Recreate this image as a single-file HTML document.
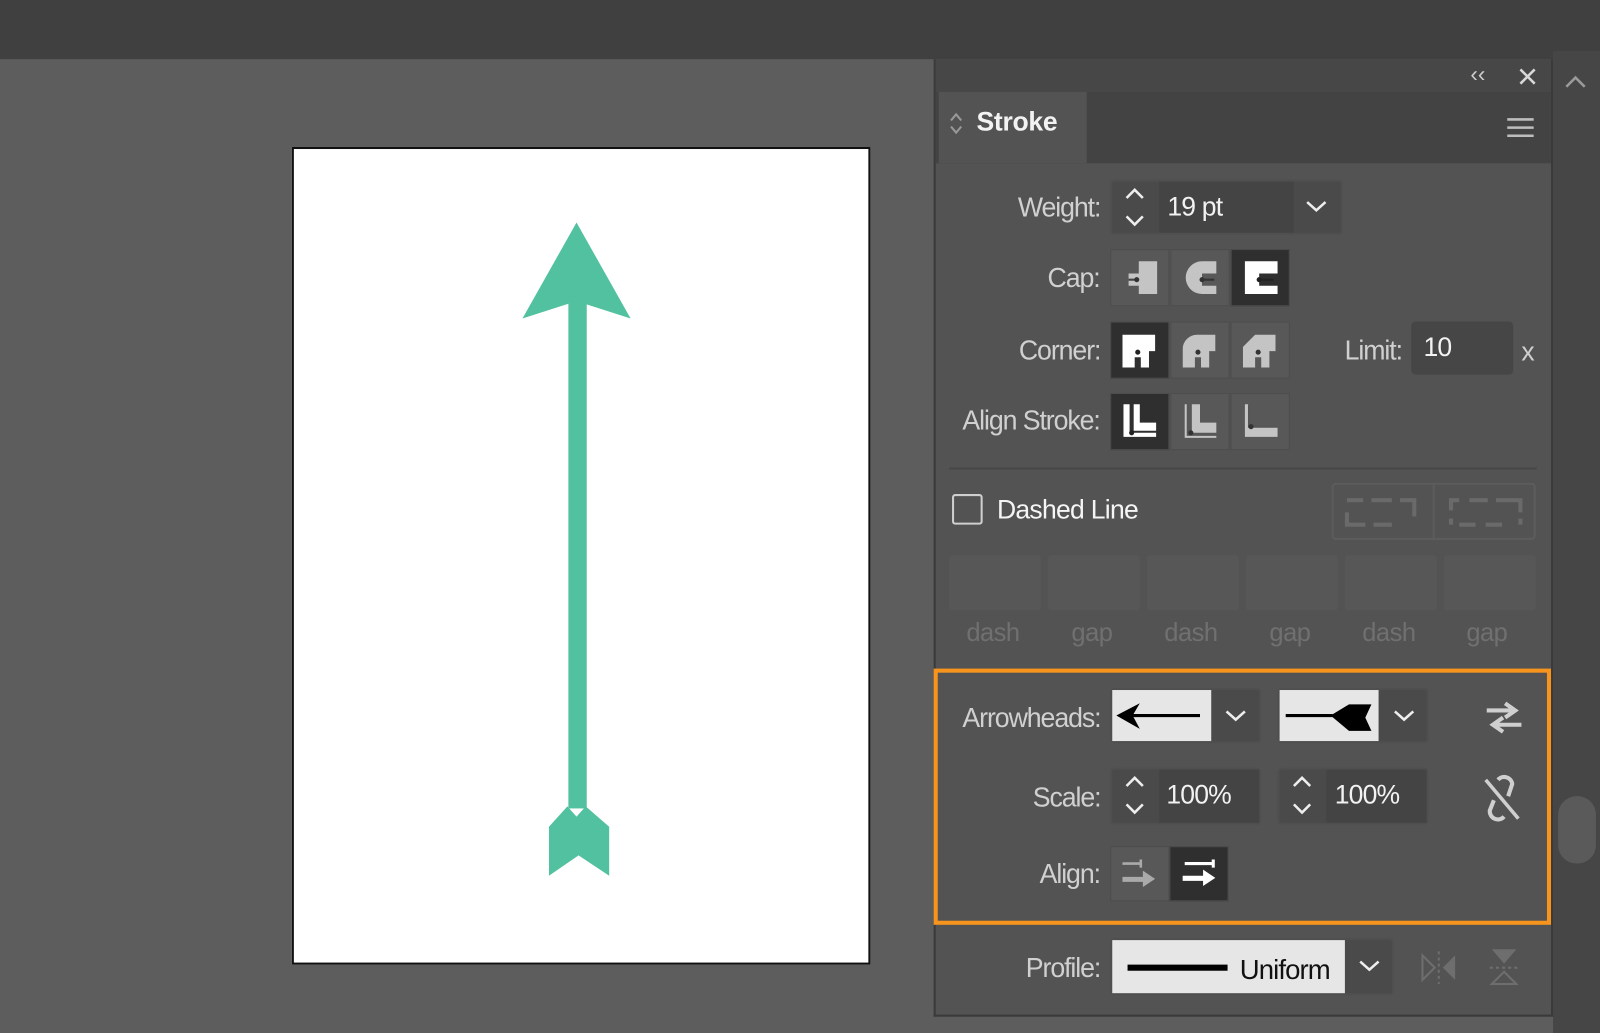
<!DOCTYPE html>
<html><head><style>
*{margin:0;padding:0;box-sizing:border-box}
html,body{width:1600px;height:1033px;overflow:hidden;background:#5b5b5b}
#f{position:absolute;left:0;top:0;width:1568px;height:1012px;transform:scale(1.02041,1.02075);transform-origin:0 0;font-family:"Liberation Sans",sans-serif;background:#5d5d5d}
.a{position:absolute}
.lbl{position:absolute;right:490px;color:#d0d0d0;font-size:27px;letter-spacing:-1.1px;text-align:right;white-space:nowrap;transform:scaleX(0.97);transform-origin:right}
.box{position:absolute;background:#4a4a4a;border:2px solid #4f4f4f;border-radius:4px}
.btn{position:absolute;width:58px;height:56px;background:#585858;border:1px solid #4d4d4d}
.sel{background:#2f2f2f}
.val{position:absolute;color:#f2f2f2;font-size:26px;letter-spacing:-0.8px}
.dim{color:#707070;font-size:25px;position:absolute;letter-spacing:-0.5px}
</style></head><body><div id="f">
<div class="a" style="left:0;top:0;width:1568px;height:58px;background:#404040"></div>
<div class="a" style="left:1522px;top:50px;width:46px;height:962px;background:#464646"></div>
<svg class="a" style="left:1533px;top:72px" width="22" height="16"><path d="M2 13 L11 4 L20 13" stroke="#9a9a9a" stroke-width="2.5" fill="none"/></svg>
<div class="a" style="left:1527px;top:780px;width:37px;height:66px;background:#5a5a5a;border-radius:18px"></div>
<div class="a" style="left:286px;top:144px;width:567px;height:801px;background:#fff;border:2px solid #111"></div>
<svg class="a" style="left:500px;top:210px" width="130" height="660">
<path d="M65 8 L118 102 L65 85 L12 102 Z" fill="#52c1a0"/>
<rect x="57" y="80" width="18" height="502" fill="#52c1a0"/>
<path d="M38 600 L56 580 L65 590 L74 580 L97 600 L97 648 L67 628 L38 648 Z" fill="#52c1a0"/>
</svg>
<div class="a" style="left:915px;top:58px;width:607px;height:938px;background:#535353;border:2px solid #3a3a3a;border-top:none"></div>
<div class="a" style="left:917px;top:58px;width:603px;height:32px;background:#474747"></div>
<div class="a" style="left:1441px;top:60px;color:#cfcfcf;font-size:22px">‹‹</div>
<svg class="a" style="left:1487px;top:65px" width="20" height="20"><path d="M3 3L17 17M17 3L3 17" stroke="#d8d8d8" stroke-width="2.5"/></svg>
<div class="a" style="left:917px;top:90px;width:603px;height:70px;background:#434343"></div>
<div class="a" style="left:920px;top:90px;width:145px;height:70px;background:#535353"></div>
<svg class="a" style="left:930px;top:108px" width="14" height="26"><path d="M2 10L7 4L12 10M2 16L7 22L12 16" stroke="#999" stroke-width="2" fill="none"/></svg>
<div class="a" style="left:957px;top:104px;color:#f2f2f2;font-size:26px;font-weight:bold;letter-spacing:-0.3px">Stroke</div>
<svg class="a" style="left:1477px;top:114px" width="28" height="22"><path d="M0 3H26M0 11H26M0 19H26" stroke="#bdbdbd" stroke-width="2.5"/></svg>

<div class="lbl" style="top:188px">Weight:</div>
<div class="box" style="left:1088px;top:176px;width:228px;height:54px"></div>
<div class="a" style="left:1136px;top:178px;width:132px;height:50px;background:#444"></div>
<svg class="a" style="left:1098px;top:180px" width="28" height="46"><path d="M6 14L14 6L22 14M6 32L14 40L22 32" stroke="#eee" stroke-width="2.5" fill="none"/></svg>
<div class="val" style="left:1144px;top:187px">19 pt</div>
<svg class="a" style="left:1279px;top:195px" width="22" height="14"><path d="M2 3L11 11L20 3" stroke="#eee" stroke-width="2.5" fill="none"/></svg>

<div class="lbl" style="top:257px">Cap:</div>
<div class="btn" style="left:1088px;top:244px"></div><div class="btn" style="left:1147px;top:244px"></div><div class="btn sel" style="left:1206px;top:244px"></div>
<svg class="a" style="left:1100px;top:254px" width="36" height="36"><path d="M16 2H34V34H16V26H6V14H16Z" fill="#c4c4c4"/><path d="M6 20H14" stroke="#444" stroke-width="2"/><circle cx="14" cy="20" r="2.5" fill="#333"/></svg>
<svg class="a" style="left:1158px;top:254px" width="36" height="36"><path d="M20 2H34V14H20V26H34V34H20A16 16 0 0 1 20 2Z" fill="#c4c4c4"/><circle cx="20" cy="20" r="2.5" fill="#333"/><path d="M20 20H32" stroke="#333" stroke-width="2"/></svg>
<svg class="a" style="left:1218px;top:254px" width="36" height="36"><path d="M2 2H34V14H16V26H34V34H2Z" fill="#fff"/><circle cx="16" cy="20" r="2.5" fill="#222"/><path d="M16 20H30" stroke="#222" stroke-width="2"/></svg>

<div class="lbl" style="top:328px">Corner:</div>
<div class="btn sel" style="left:1088px;top:315px"></div><div class="btn" style="left:1147px;top:315px"></div><div class="btn" style="left:1206px;top:315px"></div>
<svg class="a" style="left:1100px;top:326px" width="34" height="36"><path d="M0 2H32V18H26V34H18V24H12V34H0Z" fill="#fff"/><circle cx="15" cy="19" r="2.5" fill="#222"/></svg>
<svg class="a" style="left:1159px;top:326px" width="34" height="36"><path d="M14 2H32V18H26V34H18V24H12V34H0V16A14 14 0 0 1 14 2Z" fill="#c4c4c4"/><circle cx="15" cy="19" r="2.5" fill="#333"/></svg>
<svg class="a" style="left:1218px;top:326px" width="34" height="36"><path d="M12 2H32V18H26V34H18V24H12V34H0V14Z" fill="#c4c4c4"/><circle cx="15" cy="19" r="2.5" fill="#333"/></svg>
<div class="lbl" style="right:194px;top:328px">Limit:</div>
<div class="a" style="left:1383px;top:315px;width:100px;height:52px;background:#464646;border-radius:4px"></div>
<div class="val" style="left:1395px;top:325px">10</div>
<div class="a" style="left:1491px;top:329px;color:#d0d0d0;font-size:26px">x</div>

<div class="lbl" style="top:397px">Align Stroke:</div>
<div class="btn sel" style="left:1088px;top:385px"></div><div class="btn" style="left:1147px;top:385px"></div><div class="btn" style="left:1206px;top:385px"></div>
<svg class="a" style="left:1099px;top:394px" width="36" height="38"><path d="M2 2H8V30H34V34H2Z" fill="#fff"/><path d="M12 2H18V20H34V28H12Z" fill="#fff"/><circle cx="10" cy="30" r="2.5" fill="#222"/></svg>
<svg class="a" style="left:1158px;top:394px" width="36" height="38"><path d="M4 2V34H34" stroke="#c4c4c4" stroke-width="2" fill="none"/><path d="M10 2H18V20H34V30H10Z" fill="#c4c4c4"/><circle cx="9" cy="30" r="2.5" fill="#333"/></svg>
<svg class="a" style="left:1218px;top:394px" width="36" height="38"><path d="M2 2H6V24H34V34H2Z" fill="#c4c4c4"/><path d="M6 2V24H34" stroke="#555" stroke-width="2" fill="none"/><circle cx="8" cy="24" r="2.5" fill="#333"/></svg>

<div class="a" style="left:930px;top:458px;width:576px;height:2px;background:#484848"></div>
<div class="a" style="left:933px;top:484px;width:30px;height:30px;border:2px solid #cfcfcf;border-radius:3px"></div>
<div class="a" style="left:977px;top:484px;color:#f5f5f5;font-size:26px;letter-spacing:-0.7px">Dashed Line</div>
<div class="a" style="left:1305px;top:473px;width:200px;height:56px;border:2px solid #5c5c5c;border-radius:4px"></div>
<div class="a" style="left:1404px;top:475px;width:2px;height:52px;background:#5c5c5c"></div>
<svg class="a" style="left:1316px;top:484px" width="180" height="36"><g stroke="#6a6a6a" stroke-width="4" fill="none"><path d="M4 18V30H22M30 30H48M56 6H70V14M4 6H20M28 6H48M70 22V14"/><path d="M106 16V6H114M124 6H142M150 6H174V18M106 24V30M114 30H130M140 30H156M174 24V30"/></g></svg>
<div class="a" style="left:930px;top:544px;width:575px;height:54px;display:flex;gap:7px">
<div style="flex:1;background:#575757;border-radius:3px"></div><div style="flex:1;background:#575757;border-radius:3px"></div><div style="flex:1;background:#575757;border-radius:3px"></div><div style="flex:1;background:#575757;border-radius:3px"></div><div style="flex:1;background:#575757;border-radius:3px"></div><div style="flex:1;background:#575757;border-radius:3px"></div></div>
<div class="dim" style="left:947px;top:606px">dash</div><div class="dim" style="left:1050px;top:606px">gap</div><div class="dim" style="left:1141px;top:606px">dash</div><div class="dim" style="left:1244px;top:606px">gap</div><div class="dim" style="left:1335px;top:606px">dash</div><div class="dim" style="left:1437px;top:606px">gap</div>

<div class="a" style="left:915px;top:655px;width:605px;height:251px;border:4px solid #f7941d"></div>
<div class="lbl" style="top:688px">Arrowheads:</div>
<div class="box" style="left:1088px;top:674px;width:148px;height:54px"></div>
<div class="a" style="left:1090px;top:676px;width:97px;height:50px;background:#e6e6e6"></div>
<svg class="a" style="left:1090px;top:676px" width="97" height="50"><path d="M86 25H14" stroke="#000" stroke-width="3"/><path d="M4 25L27 13L20 25L27 38Z" fill="#000"/></svg>
<svg class="a" style="left:1200px;top:694px" width="22" height="14"><path d="M2 3L11 11L20 3" stroke="#eee" stroke-width="2.5" fill="none"/></svg>
<div class="box" style="left:1252px;top:674px;width:148px;height:54px"></div>
<div class="a" style="left:1254px;top:676px;width:97px;height:50px;background:#e6e6e6"></div>
<svg class="a" style="left:1254px;top:676px" width="97" height="50"><path d="M6 25H52" stroke="#000" stroke-width="3"/><path d="M50 25L68 14H90L84 27L90 40H68Z" fill="#000"/></svg>
<svg class="a" style="left:1365px;top:694px" width="22" height="14"><path d="M2 3L11 11L20 3" stroke="#eee" stroke-width="2.5" fill="none"/></svg>
<svg class="a" style="left:1455px;top:686px" width="38" height="34"><path d="M2 10H28M20 3L30 10L20 17" stroke="#cfcfcf" stroke-width="4" fill="none"/><path d="M36 24H10M18 17L8 24L18 31" stroke="#cfcfcf" stroke-width="4" fill="none"/></svg>

<div class="lbl" style="top:766px">Scale:</div>
<div class="box" style="left:1088px;top:752px;width:148px;height:56px"></div>
<div class="a" style="left:1136px;top:754px;width:98px;height:52px;background:#444"></div>
<svg class="a" style="left:1098px;top:756px" width="28" height="46"><path d="M6 14L14 6L22 14M6 32L14 40L22 32" stroke="#eee" stroke-width="2.5" fill="none"/></svg>
<div class="val" style="left:1143px;top:763px">100%</div>
<div class="box" style="left:1252px;top:752px;width:148px;height:56px"></div>
<div class="a" style="left:1300px;top:754px;width:98px;height:52px;background:#444"></div>
<svg class="a" style="left:1262px;top:756px" width="28" height="46"><path d="M6 14L14 6L22 14M6 32L14 40L22 32" stroke="#eee" stroke-width="2.5" fill="none"/></svg>
<div class="val" style="left:1308px;top:763px">100%</div>
<svg class="a" style="left:1452px;top:758px" width="40" height="48"><path d="M16 6A8 8 0 0 1 30 10L26 22M12 26L8 36A8 8 0 0 0 22 42" stroke="#cfcfcf" stroke-width="4" fill="none"/><path d="M4 6L36 44" stroke="#cfcfcf" stroke-width="3.5"/></svg>

<div class="lbl" style="top:841px">Align:</div>
<div class="btn" style="left:1088px;top:829px;height:54px"></div><div class="btn sel" style="left:1146px;top:829px;height:54px"></div>
<svg class="a" style="left:1098px;top:842px" width="36" height="30"><path d="M2 4H20M20 0V8" stroke="#aaa" stroke-width="2.5"/><path d="M2 17H22V11L34 19L22 27V22H2Z" fill="#aaa"/></svg>
<svg class="a" style="left:1157px;top:842px" width="36" height="30"><path d="M4 4H32M32 0V8" stroke="#fff" stroke-width="3"/><path d="M2 16H22V10L34 18L22 26V21H2Z" fill="#fff"/></svg>

<div class="lbl" style="top:933px">Profile:</div>
<div class="box" style="left:1088px;top:919px;width:278px;height:56px"></div>
<div class="a" style="left:1090px;top:921px;width:228px;height:52px;background:#e6e6e6"></div>
<div class="a" style="left:1105px;top:945px;width:98px;height:6px;background:#000"></div>
<div class="a" style="left:1215px;top:935px;color:#111;font-size:27px;letter-spacing:-0.9px">Uniform</div>
<svg class="a" style="left:1331px;top:939px" width="22" height="14"><path d="M2 3L11 11L20 3" stroke="#eee" stroke-width="2.5" fill="none"/></svg>
<svg class="a" style="left:1392px;top:930px" width="38" height="36"><path d="M2 6L14 18L2 30Z" stroke="#6e6e6e" stroke-width="2" fill="none"/><path d="M34 6L22 18L34 30Z" fill="#6e6e6e"/><path d="M18 2V34" stroke="#6e6e6e" stroke-width="2" stroke-dasharray="3 3"/></svg>
<svg class="a" style="left:1458px;top:928px" width="32" height="40"><path d="M4 2H28L16 16Z" fill="#6e6e6e"/><path d="M4 36H28L16 24Z" stroke="#6e6e6e" stroke-width="2" fill="none"/><path d="M2 20H30" stroke="#6e6e6e" stroke-width="2" stroke-dasharray="3 3"/></svg>
</div></body></html>
